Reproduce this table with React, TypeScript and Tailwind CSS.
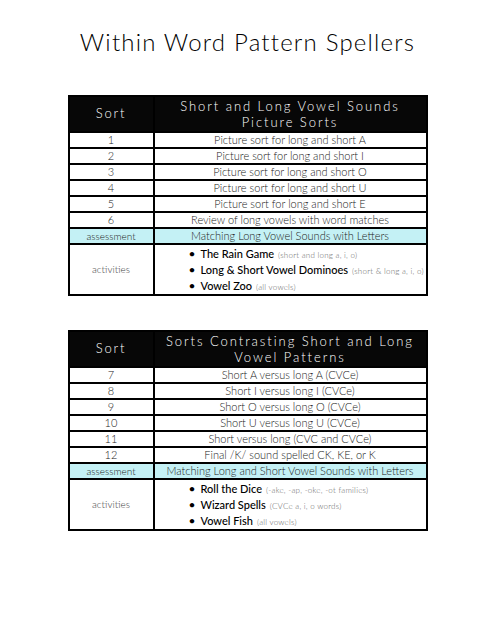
import React from "react";

const font = { fontFamily: "Lato, 'Open Sans', sans-serif" };

type Act = { name: string; note: string };

function Table({
  header,
  rows,
  assessment,
  activities,
}: {
  header: string[];
  rows: [string, string][];
  assessment: string;
  activities: Act[];
}) {
  return (
    <table className="w-[360px] mx-auto border-collapse border-2 border-black">
      <thead>
        <tr className="h-[36px] bg-[#070707]">
          <th className="w-[85px] border-2 border-black text-white font-light text-[13px] tracking-[0.14em] align-middle">
            Sort
          </th>
          <th className="border-2 border-black text-white font-light text-[13px] leading-[16px] tracking-[0.15em] align-middle">
            {header.map((h) => (
              <div key={h}>{h}</div>
            ))}
          </th>
        </tr>
      </thead>
      <tbody>
        {rows.map(([n, t]) => (
          <tr key={n} className="h-[16px]">
            <td className="border-2 border-black text-center text-[11px] leading-[12px] font-light text-[#222] p-0">
              {n}
            </td>
            <td className="border-2 border-black text-center text-[11px] leading-[12px] font-light text-[#222] p-0">
              {t}
            </td>
          </tr>
        ))}
        <tr className="h-[16px] bg-[#c4f1f5]">
          <td className="border-2 border-black text-center text-[10px] leading-[12px] font-light text-[#222] p-0">
            assessment
          </td>
          <td className="border-2 border-black text-center text-[11px] leading-[12px] font-light text-[#222] p-0">
            {assessment}
          </td>
        </tr>
        <tr className="h-[51px]">
          <td className="border-2 border-black text-center text-[10px] font-light text-[#444] p-0">
            activities
          </td>
          <td className="border-2 border-black p-0 align-middle">
            <ul className="pl-[34px] flex flex-col">
              {activities.map((a) => (
                <li key={a.name} className="flex items-baseline h-[16px] leading-[16px]">
                  <span className="w-[12px] text-[12px] text-black">•</span>
                  <span className="text-[11px] font-medium text-black">{a.name}</span>
                  <span className="text-[8px] tracking-[0.03em] font-light text-[#666] ml-[4px]">{a.note}</span>
                </li>
              ))}
            </ul>
          </td>
        </tr>
      </tbody>
    </table>
  );
}

export default function App() {
  return (
    <div className="w-[495px] h-[640px] bg-white" style={font}>
      <h1 className="pt-[27px] h-[95px] text-center text-[24px] leading-[30px] font-light tracking-[0.05em] text-black">
        Within Word Pattern Spellers
      </h1>
      <Table
        header={["Short and Long Vowel Sounds", "Picture Sorts"]}
        rows={[
          ["1", "Picture sort for long and short A"],
          ["2", "Picture sort for long and short I"],
          ["3", "Picture sort for long and short O"],
          ["4", "Picture sort for long and short U"],
          ["5", "Picture sort for long and short E"],
          ["6", "Review of long vowels with word matches"],
        ]}
        assessment="Matching Long Vowel Sounds with Letters"
        activities={[
          { name: "The Rain Game", note: "(short and long a, i, o)" },
          { name: "Long & Short Vowel Dominoes", note: "(short & long a, i, o)" },
          { name: "Vowel Zoo", note: "(all vowels)" },
        ]}
      />
      <div className="h-[34px]" />
      <Table
        header={["Sorts Contrasting Short and Long", "Vowel Patterns"]}
        rows={[
          ["7", "Short A versus long A (CVCe)"],
          ["8", "Short I versus long I (CVCe)"],
          ["9", "Short O versus long O (CVCe)"],
          ["10", "Short U versus long U (CVCe)"],
          ["11", "Short  versus long  (CVC and CVCe)"],
          ["12", "Final /K/ sound spelled CK, KE, or K"],
        ]}
        assessment="Matching Long and Short Vowel Sounds with Letters"
        activities={[
          { name: "Roll the Dice", note: "(-ake, -ap, -oke, -ot families)" },
          { name: "Wizard Spells", note: "(CVCe a, i, o words)" },
          { name: "Vowel Fish", note: "(all vowels)" },
        ]}
      />
    </div>
  );
}
